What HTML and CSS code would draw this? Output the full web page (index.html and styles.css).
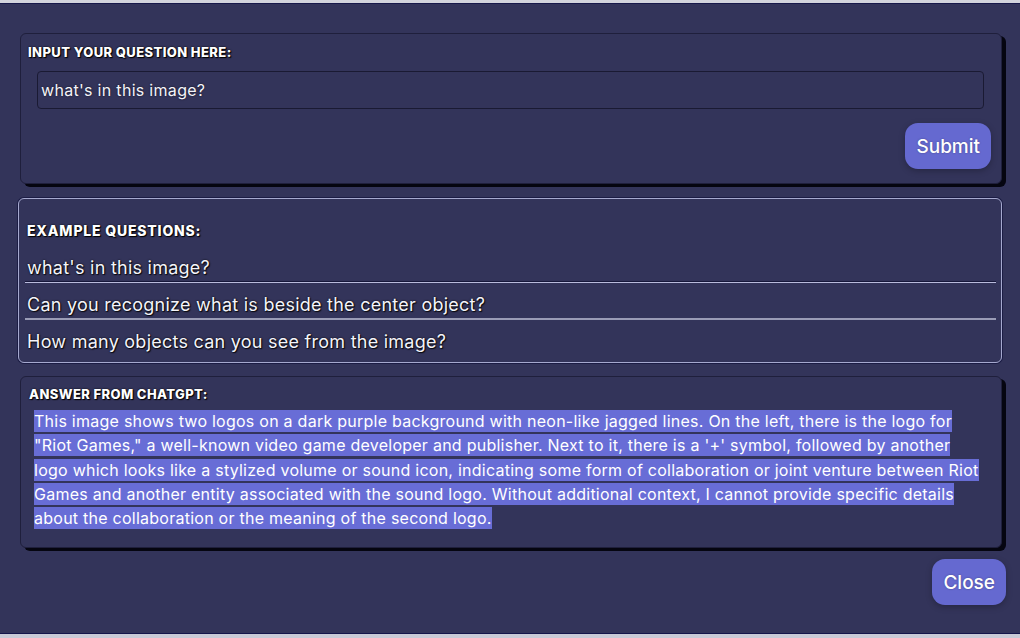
FILE: index.html
```html
<!DOCTYPE html>
<html lang="en">
<head>
<meta charset="utf-8">
<title>Ask ChatGPT</title>
<link rel="stylesheet" href="styles.css">
</head>
<body>
<div class="topbar"></div>
<main class="panel">
  <section class="card card-input">
    <div class="label">INPUT YOUR QUESTION HERE:</div>
    <div class="field">what's in this image?</div>
    <div class="actions">
      <button class="btn">Submit</button>
    </div>
  </section>

  <section class="card card-examples">
    <div class="label label-wide">EXAMPLE QUESTIONS:</div>
    <ul class="examples">
      <li class="example first">what's in this image?</li>
      <li class="example second">Can you recognize what is beside the center object?</li>
      <li class="example">How many objects can you see from the image?</li>
    </ul>
  </section>

  <section class="card card-answer">
    <div class="label">ANSWER FROM CHATGPT:</div>
    <p class="answer"><span class="hl">This image shows two logos on a dark purple background with neon-like jagged lines. On the left, there is the logo for "Riot Games," a well-known video game developer and publisher. Next to it, there is a '+' symbol, followed by another logo which looks like a stylized volume or sound icon, indicating some form of collaboration or joint venture between Riot Games and another entity associated with the sound logo. Without additional context, I cannot provide specific details about the collaboration or the meaning of the second logo.</span></p>
  </section>

  <div class="actions close-row">
    <button class="btn">Close</button>
  </div>
</main>
<div class="bottombar"></div>
</body>
</html>
```

FILE: styles.css
```css
* { box-sizing: border-box; }

html, body {
  margin: 0;
  padding: 0;
  height: 100%;
}

body {
  background: #33345a;
  font-family: "Inter", "Noto Sans", sans-serif;
  color: #f4f4fa;
  display: flex;
  flex-direction: column;
  overflow: hidden;
}

.topbar {
  height: 4px;
  background: #d3d4dc;
  border-bottom: 1px solid #17184a;
  flex: none;
}

.bottombar {
  height: 5px;
  background: #c9cad6;
  border-top: 1px solid #14154a;
  flex: none;
}

.panel {
  flex: 1;
  padding: 29px 18px 0 18px;
  display: flex;
  flex-direction: column;
}

.card {
  background: #33345a;
  border-radius: 6px;
}

.card-input,
.card-answer {
  margin-left: 2px;
  border: 1px solid #1f1f3c;
  box-shadow: 4px 3px 0 #050510;
}

.label {
  font-size: 13px;
  line-height: 16px;
  font-weight: 800;
  color: #ffffff;
  letter-spacing: 0.4px;
  text-shadow: 0 0 2px #000, 1px 1px 1px #000;
}

.label-wide {
  font-size: 14px;
  letter-spacing: 0.8px;
}

/* input card */
.card-input {
  height: 151px;
  padding: 10px 10px 0 7px;
}

.field {
  margin: 11px 7px 0 9px;
  height: 38px;
  border: 1px solid #1a1a33;
  border-radius: 4px;
  padding: 0 3px;
  font-size: 16px;
  letter-spacing: 0.3px;
  line-height: 36px;
  color: #f4f4fa;
  text-shadow: 0 0 2px rgba(0,0,0,0.7);
}

.actions {
  display: flex;
  justify-content: flex-end;
}

.card-input .actions {
  margin-top: 14px;
}

.btn {
  font-family: "Inter", "Noto Sans", sans-serif;
  font-size: 19px;
  font-weight: 500;
  color: #ffffff;
  background: #6569d0;
  border: none;
  border-radius: 13px;
  height: 46px;
  padding: 0 11px;
  box-shadow: 0 2px 6px rgba(0,0,0,0.25);
  text-shadow: 0 0 2px rgba(0,0,0,0.35);
}

/* examples card */
.card-examples {
  margin-top: 14px;
  border: 1px solid #a6a9cf;
  box-shadow: 0 0 0 1px #1b1c44;
  padding: 24px 5px 6px 6px;
}

.card-examples .label {
  margin-left: 2px;
}

.examples {
  list-style: none;
  margin: 7px 0 0 0;
  padding: 0;
}

.example {
  font-size: 18px;
  letter-spacing: 0.25px;
  line-height: 27px;
  height: 36px;
  padding: 8px 0 0 2px;
  color: #f4f4fa;
  text-shadow: 0 0 2px #000, 1px 1px 1px rgba(0,0,0,0.8);
}

.example.first {
  height: 37px;
  border-bottom: 1px solid #b9bbdc;
  box-shadow: 0 -1px 0 #16173a inset;
}

.example.second {
  height: 37px;
  border-bottom: 2px solid #9a9cb6;
}

/* answer card */
.card-answer {
  margin-top: 13px;
  height: 172px;
  padding: 9px 20px 0 8px;
}

.answer {
  margin: 7px 0 0 5px;
  font-size: 16px;
  letter-spacing: 0.25px;
  line-height: 24.3px;
  color: #ffffff;
}

.hl {
  background: #686dd6;
  padding: 1px 0;
}

.close-row {
  margin-top: 11px;
  margin-right: -4px;
}
```
